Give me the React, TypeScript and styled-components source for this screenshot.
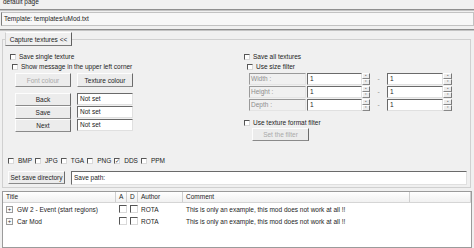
import React from "react";
import styled, { createGlobalStyle } from "styled-components";

const GlobalStyle = createGlobalStyle`
  html, body { margin: 0; padding: 0; background: #f0f0f0; }
  body { font-family: "Liberation Sans", Arial, sans-serif; }
`;

const Window = styled.div`
  width: 474px;
  height: 248px;
  overflow: hidden;
  background: #f0f0f0;
  font-family: "Liberation Sans", Arial, sans-serif;
  font-size: 6.5px;
  color: #1c1c1c;
  display: flex;
  flex-direction: column;
`;

const PageTitle = styled.div`
  height: 9px;
  overflow: hidden;
  padding-left: 3px;
  span {
    display: block;
    margin-top: -2px;
    line-height: 8px;
  }
`;

const Rule = styled.div<{ $top?: number }>`
  height: 0;
  border-top: 1px solid #8e8e8e;
  border-bottom: 1px solid #c4c4c4;
  margin-top: ${(p) => p.$top ?? 0}px;
`;

const TemplateBox = styled.div`
  margin: 1px 0 0 1px;
  height: 12px;
  line-height: 12px;
  padding-left: 2px;
  background: #f7f7f7;
  border: 1px solid #c3c3c3;
  border-left-color: #7d7d7d;
`;

const Group = styled.div`
  margin: 8px 3px 0 2px;
  border: 1px solid #d0d0d0;
  padding: 0 3px 2px 5px;
  display: flex;
  flex-direction: column;
`;

const Btn = styled.div<{ $w?: number; $h?: number; $disabled?: boolean }>`
  width: ${(p) => p.$w ?? 56}px;
  height: ${(p) => p.$h ?? 13}px;
  box-sizing: border-box;
  display: flex;
  align-items: center;
  justify-content: center;
  background: #ececec;
  border: 1px solid #fdfdfd;
  border-right-color: #6b6b6b;
  border-bottom-color: #8a8a8a;
  color: ${(p) => (p.$disabled ? "#a9a9a9" : "#1c1c1c")};
  white-space: nowrap;
`;

const Legend = styled(Btn)`
  margin: -8px 0 0 -3px;
  padding: 0 4px;
  background: #f0f0f0;
  border-color: #ffffff #5f5f5f #7a7a7a #d0d0d0;
`;

const Body = styled.div`
  display: grid;
  grid-template-columns: 235px 1fr;
`;

const Column = styled.div`
  display: flex;
  flex-direction: column;
`;

const CheckRow = styled.label<{ $indent?: number; $top?: number }>`
  display: flex;
  align-items: center;
  gap: 3px;
  height: 9px;
  margin-left: ${(p) => p.$indent ?? 0}px;
  margin-top: ${(p) => p.$top ?? 0}px;
  white-space: nowrap;
`;

const Box = styled.span<{ $size?: number }>`
  width: ${(p) => p.$size ?? 4}px;
  height: ${(p) => p.$size ?? 4}px;
  flex: none;
  background: #ffffff;
  border: 1px solid #d9d9d9;
  border-top-color: #555;
  border-left-color: #555;
  font-size: 6px;
  line-height: 4px;
  text-align: center;
  color: #333;
  overflow: visible;
`;

const ButtonRow = styled.div<{ $top?: number; $indent?: number }>`
  display: flex;
  gap: 6px;
  margin-top: ${(p) => p.$top ?? 0}px;
  margin-left: ${(p) => p.$indent ?? 0}px;
`;

const Field = styled.div<{ $w?: number }>`
  width: ${(p) => (p.$w ? `${p.$w}px` : "auto")};
  flex: ${(p) => (p.$w ? "none" : "1")};
  height: 12px;
  box-sizing: border-box;
  background: #ffffff;
  border: 1px solid #e0e0e0;
  border-top-color: #6a6a6a;
  border-left-color: #6a6a6a;
  padding-left: 2px;
  line-height: 9px;
  white-space: nowrap;
`;

const FilterGrid = styled.div`
  display: grid;
  grid-template-columns: 57px 56px 8px 17px 56px 9px;
  grid-auto-rows: 13px;
  margin: 2px 0 0 6px;
  width: 204px;
  & > :nth-child(6n + 2) {
    margin-left: 1px;
  }
`;

const FilterLabel = styled.div`
  box-sizing: border-box;
  height: 12px;
  border: 1px solid #e4e4e4;
  border-top-color: #9a9a9a;
  border-left-color: #9a9a9a;
  color: #8d8d8d;
  padding-left: 1px;
  line-height: 10px;
`;

const Spinner = styled.div`
  display: flex;
  flex-direction: column;
  height: 12px;
  span {
    flex: 1;
    background: #ececec;
    border: 1px solid #fff;
    border-right-color: #777;
    border-bottom-color: #888;
    font-size: 3px;
    line-height: 3px;
    color: #777;
    text-align: center;
  }
`;

const Dash = styled.div`
  text-align: center;
  color: #8d8d8d;
  line-height: 12px;
`;

const FormatRow = styled.div`
  display: flex;
  align-items: center;
  height: 9px;
  margin-top: 15px;
`;

const FormatItem = styled.span`
  display: flex;
  align-items: center;
  gap: 4px;
  margin-right: 3px;
`;

const SaveRow = styled.div`
  display: flex;
  gap: 6px;
  margin-top: 6px;
`;

const PathField = styled(Field)`
  height: 14px;
  line-height: 11px;
`;

const Table = styled.div`
  margin: 3px 2px 0 2px;
  flex: 1;
  border: 1px solid #9b9b9b;
  background: #ffffff;
`;

const cols = "113px 11px 11px 45px 227px 1fr";

const HeaderRow = styled.div`
  display: grid;
  grid-template-columns: ${cols};
  height: 10px;
  background: linear-gradient(#ffffff, #f1f1f1);
  border-bottom: 1px solid #d5d5d5;
  & > div {
    border-right: 1px solid #cfcfcf;
    padding-left: 3px;
    line-height: 10px;
    white-space: nowrap;
  }
`;

const DataRow = styled.div`
  display: grid;
  grid-template-columns: ${cols};
  height: 12px;
  align-items: center;
  & > div {
    padding-left: 3px;
    white-space: nowrap;
    display: flex;
    align-items: center;
  }
`;

const Expander = styled.span`
  width: 5px;
  height: 5px;
  border: 1px solid #9a9a9a;
  font-size: 6px;
  line-height: 5px;
  text-align: center;
  color: #333;
  margin-right: 4px;
  background: #fafafa;
`;

const CellBox = styled(Box)`
  width: 6px;
  height: 6px;
`;

const formats = [
  { name: "BMP", checked: false },
  { name: "JPG", checked: false },
  { name: "TGA", checked: false },
  { name: "PNG", checked: false },
  { name: "DDS", checked: true },
  { name: "PPM", checked: false },
];

const mods = [
  { title: "GW 2 - Event  (start regions)", author: "ROTA" },
  { title: "Car Mod", author: "ROTA" },
];

const filterRows = ["Width :", "Height :", "Depth :"];

export default function App() {
  return (
    <Window>
      <GlobalStyle />
      <PageTitle>
        <span>default page</span>
      </PageTitle>
      <Rule />
      <TemplateBox>Template: templates/uMod.txt</TemplateBox>
      <Rule $top={3} />
      <Group>
        <Legend $w={67} $h={14}>
          Capture textures &lt;&lt;
        </Legend>
        <Body>
          <Column>
            <CheckRow $indent={2} $top={6}>
              <Box />
              Save single texture
            </CheckRow>
            <CheckRow $indent={4} $top={1}>
              <Box />
              Show message in the upper left corner
            </CheckRow>
            <ButtonRow $top={2} $indent={7}>
              <Btn $h={14} $disabled>
                Font colour
              </Btn>
              <Btn $h={14}>Texture colour</Btn>
            </ButtonRow>
            {["Back", "Save", "Next"].map((b, i) => (
              <ButtonRow key={b} $top={i === 0 ? 6 : 0} $indent={7}>
                <Btn>{b}</Btn>
                <Field $w={56}>Not set</Field>
              </ButtonRow>
            ))}
          </Column>
          <Column>
            <CheckRow $indent={1} $top={6}>
              <Box />
              Save all textures
            </CheckRow>
            <CheckRow $indent={4} $top={1}>
              <Box />
              Use size filter
            </CheckRow>
            <FilterGrid>
              {filterRows.map((r) => (
                <React.Fragment key={r}>
                  <FilterLabel>{r}</FilterLabel>
                  <Field>1</Field>
                  <Spinner>
                    <span>▴</span>
                    <span>▾</span>
                  </Spinner>
                  <Dash>-</Dash>
                  <Field>1</Field>
                  <Spinner>
                    <span>▴</span>
                    <span>▾</span>
                  </Spinner>
                </React.Fragment>
              ))}
            </FilterGrid>
            <CheckRow $indent={1} $top={6}>
              <Box />
              Use texture format filter
            </CheckRow>
            <ButtonRow $top={1} $indent={9}>
              <Btn $w={57} $disabled>
                Set the filter
              </Btn>
            </ButtonRow>
          </Column>
        </Body>
        <FormatRow>
          {formats.map((f) => (
            <FormatItem key={f.name}>
              <Box>{f.checked ? "✓" : ""}</Box>
              {f.name}
            </FormatItem>
          ))}
        </FormatRow>
        <SaveRow>
          <Btn $w={57} $h={13}>
            Set save directory
          </Btn>
          <PathField>Save path:</PathField>
        </SaveRow>
      </Group>
      <Table>
        <HeaderRow>
          <div>Title</div>
          <div>A</div>
          <div>D</div>
          <div>Author</div>
          <div>Comment</div>
          <div />
        </HeaderRow>
        {mods.map((m) => (
          <DataRow key={m.title}>
            <div>
              <Expander>+</Expander>
              {m.title}
            </div>
            <div>
              <CellBox />
            </div>
            <div>
              <CellBox />
            </div>
            <div>{m.author}</div>
            <div>This is only an example, this mod does not work at all !!</div>
            <div />
          </DataRow>
        ))}
      </Table>
    </Window>
  );
}
